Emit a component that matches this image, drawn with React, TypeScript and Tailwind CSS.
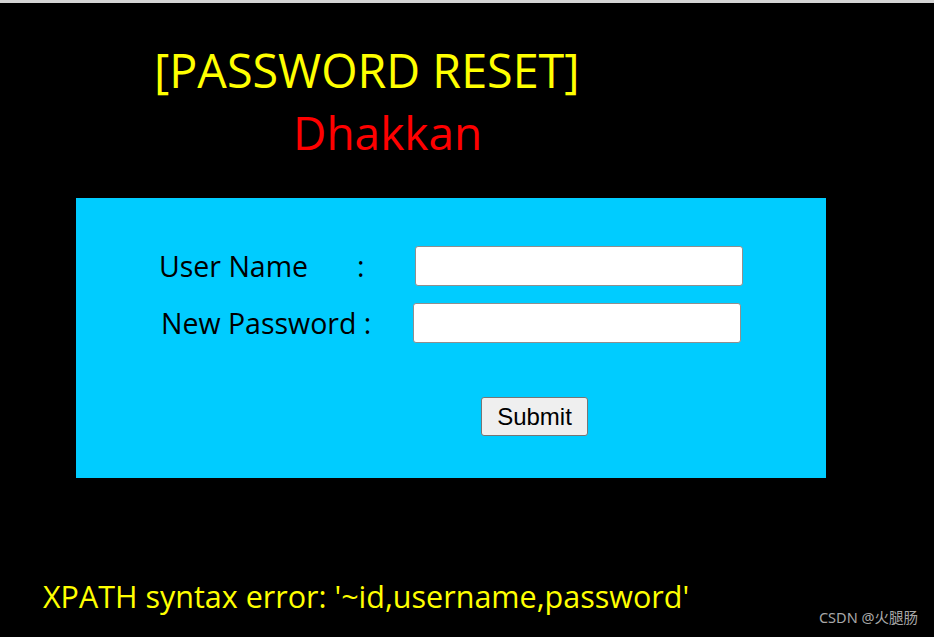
export default function App() {
  return (
    <div className="h-[637px] w-[934px] overflow-hidden bg-black border-t-[3px] border-[#d4d4d4] relative font-['Open_Sans',sans-serif]">
      <div className="pt-[37px] pl-[154px] text-[46.7px] leading-[60px] text-[#ffff00]">[PASSWORD RESET]</div>
      <div className="pt-[2px] pl-[293px] text-[46px] leading-[60px] text-[#ff0000]">Dhakkan</div>

      <div className="mt-[36px] ml-[76px] w-[750px] h-[280px] bg-[#00ccff] pt-[48px]">
        <div className="flex items-center h-[40px] text-[28.5px] text-black">
          <span className="ml-[83px] w-[198px]">User Name</span>
          <span className="w-[58px]">:</span>
          <input className="w-[328px] h-[40px] bg-white border border-[#8f8f8f] rounded-[3px]" />
        </div>
        <div className="flex items-center h-[40px] mt-[17px] text-[28.5px] text-black">
          <span className="ml-[85px] w-[252px]">New Password :</span>
          <input className="w-[328px] h-[40px] bg-white border border-[#8f8f8f] rounded-[3px]" />
        </div>
        <div className="mt-[54px] ml-[405px]">
          <button className="w-[107px] h-[39px] bg-[#efefef] border border-[#767676] rounded-[3px] text-[24px] font-['Liberation_Sans',sans-serif] text-black">
            Submit
          </button>
        </div>
      </div>

      <div className="mt-[98px] ml-[43px] text-[30.5px] leading-[40px] text-[#ffff00]">
        XPATH syntax error: '~id,username,password'
      </div>
      <div className="absolute right-[16px] bottom-[8px] text-[14.5px] text-[#a8a8a8] font-['Noto_Sans','Noto_Sans_CJK_SC',sans-serif]">
        CSDN @火腿肠
      </div>
    </div>
  );
}
